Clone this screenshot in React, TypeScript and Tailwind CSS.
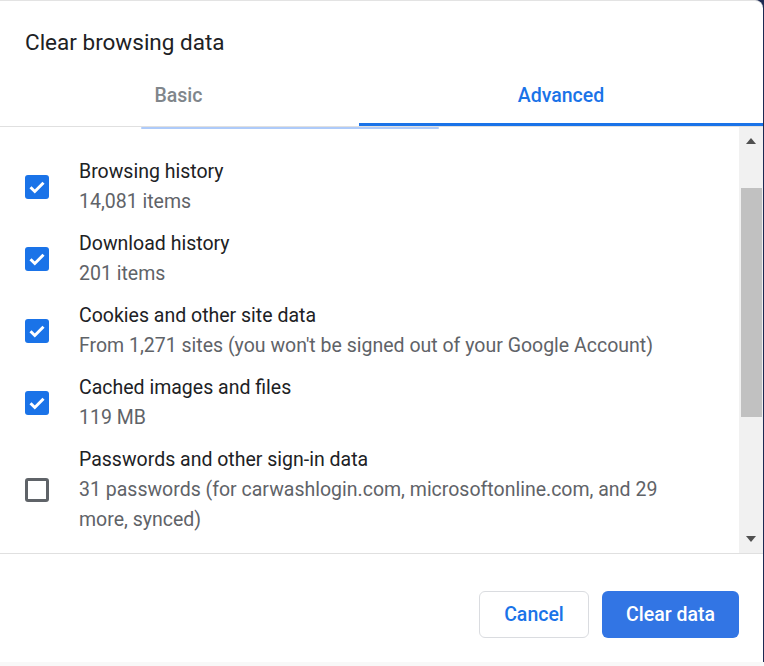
import React from 'react';

interface DataRow {
  title: string;
  lines: string[];
  checked: boolean;
}

const rows: DataRow[] = [
  { title: 'Browsing history', lines: ['14,081 items'], checked: true },
  { title: 'Download history', lines: ['201 items'], checked: true },
  {
    title: 'Cookies and other site data',
    lines: ["From 1,271 sites (you won't be signed out of your Google Account)"],
    checked: true,
  },
  { title: 'Cached images and files', lines: ['119 MB'], checked: true },
  {
    title: 'Passwords and other sign-in data',
    lines: ['31 passwords (for carwashlogin.com, microsoftonline.com, and 29', 'more, synced)'],
    checked: false,
  },
];

function Checkbox({ checked }: { checked: boolean }) {
  if (!checked) {
    return <div className="w-6 h-6 shrink-0 rounded-[3px] border-[3px] border-[#5f6368]" />;
  }
  return (
    <div className="w-6 h-6 shrink-0 rounded-[3px] bg-[#1a73e8] flex items-center justify-center">
      <svg width="24" height="24" viewBox="0 0 24 24" fill="none">
        <path d="M5.5 12.3l4.3 4.2 8.7-8.7" stroke="white" strokeWidth="3" />
      </svg>
    </div>
  );
}

function Row({ row }: { row: DataRow }) {
  return (
    <div className="flex items-center pl-[25px]">
      <Checkbox checked={row.checked} />
      <div className="ml-[30px] text-[19.5px] leading-[30px]">
        <div className="text-[#202124]">{row.title}</div>
        {row.lines.map((l) => (
          <div key={l} className="text-[#5f6368] whitespace-nowrap">
            {l}
          </div>
        ))}
      </div>
    </div>
  );
}

function Scrollbar() {
  return (
    <div className="w-[24px] bg-[#f1f1f1] flex flex-col items-center">
      <div className="h-[26px] w-full flex items-center justify-center pt-[2px]">
        <svg width="10" height="6" viewBox="0 0 10 6">
          <path d="M0 6L5 0L10 6Z" fill="#505050" />
        </svg>
      </div>
      <div className="h-[35px]" />
      <div className="w-[21px] h-[229px] bg-[#c1c1c1]" />
      <div className="flex-1" />
      <div className="h-[26px] w-full flex items-center justify-center pb-[2px]">
        <svg width="10" height="6" viewBox="0 0 10 6">
          <path d="M0 0L10 0L5 6Z" fill="#505050" />
        </svg>
      </div>
    </div>
  );
}

export default function App() {
  return (
    <div
      className="w-[764px] h-[666px] bg-[#1d2a52] flex flex-col overflow-hidden"
      style={{ fontFamily: 'Roboto, "Liberation Sans", sans-serif' }}
    >
      <div className="w-[763px] h-[662px] bg-white rounded-tr-[8px] border-t border-[#e3e3e3] flex flex-col">
        <div className="h-[65px] pl-[25px] pt-[26px] text-[22.5px] leading-[30px] text-[#202124]">
          Clear browsing data
        </div>
        <div className="flex h-[61px] border-b border-[#e0e0e0]">
          <div className="w-[359px] flex items-center justify-center pr-[2px] text-[19.5px] font-medium text-[#80868b]">
            Basic
          </div>
          <div className="flex-1 flex flex-col">
            <div className="flex-1 flex items-center justify-center pt-[3px] text-[19.5px] font-medium text-[#1a73e8]">
              Advanced
            </div>
            <div className="h-[3px] bg-[#1a73e8]" />
          </div>
        </div>
        <div className="flex h-[427px] border-b border-[#e0e0e0]">
          <div className="flex-1 relative">
            <div className="ml-[141px] w-[298px] h-[2px] rounded-full bg-[#aecbfa]" />
            <div className="pt-[28px] flex flex-col gap-[12px]">
              {rows.map((r) => (
                <Row key={r.title} row={r} />
              ))}
            </div>
          </div>
          <Scrollbar />
        </div>
        <div className="flex-1 flex justify-end items-start pt-[37px] pr-[24px] gap-[13px]">
          <button className="w-[110px] h-[47px] rounded-[6px] border border-[#dadce0] bg-white text-[19.5px] font-medium text-[#1a73e8]">
            Cancel
          </button>
          <button className="w-[137px] h-[47px] rounded-[6px] bg-[#3275e4] text-[19.5px] font-medium text-white">
            Clear data
          </button>
        </div>
      </div>
      <div className="flex-1 bg-[#f8f8f8]" />
    </div>
  );
}
